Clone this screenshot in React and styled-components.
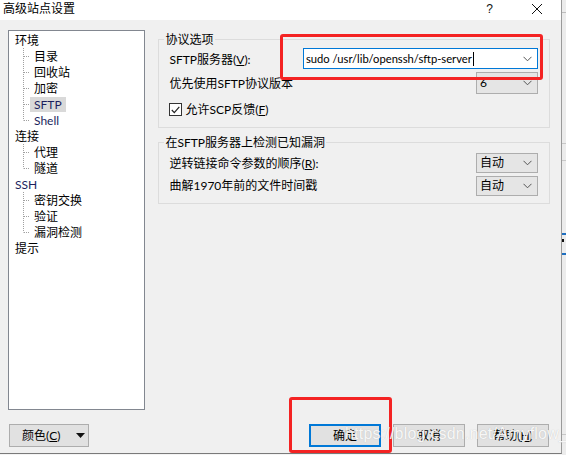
import React from "react";
import styled, { createGlobalStyle } from "styled-components";

const Global = createGlobalStyle`
  html, body { margin: 0; padding: 0; background: #f0f0f0; }
  body { font-family: Lato, "Noto Sans CJK SC", sans-serif; font-size: 12px; color: #000; }
`;

const FONT = `Lato, "Noto Sans CJK SC", sans-serif`;

const Window = styled.div`
  position: relative;
  width: 566px;
  height: 455px;
  overflow: hidden;
  display: flex;
  background: #f4f4f4;
`;

const Dialog = styled.div`
  width: 561px;
  height: 453px;
  border-right: 1px solid #9a9a9a;
  border-bottom: 1px solid #7a7a7a;
  display: flex;
  flex-direction: column;
  background: #f0f0f0;
  flex: none;
`;

const Strip = styled.div`
  flex: 1;
  background:
    linear-gradient(#bdbdbd, #bdbdbd) 0 12px / 100% 1px no-repeat,
    linear-gradient(#c8c8c8, #c8c8c8) 0 143px / 100% 1px no-repeat,
    linear-gradient(#c8c8c8, #c8c8c8) 0 160px / 100% 1px no-repeat,
    linear-gradient(#1f6fc0, #1f6fc0) 0 233px / 100% 2px no-repeat,
    linear-gradient(#111, #111) 0 239px / 60% 3px no-repeat,
    linear-gradient(#1f6fc0, #1f6fc0) 0 253px / 100% 2px no-repeat,
    linear-gradient(#c8c8c8, #c8c8c8) 0 434px / 100% 1px no-repeat,
    #ececec;
`;

const TitleBar = styled.div`
  height: 20px;
  background: #fff;
  display: flex;
  align-items: center;
  padding-left: 3px;
  flex: none;
`;

const Title = styled.span`
  flex: 1;
  font-family: ${FONT};
  font-size: 12px;
  line-height: 16px;
  margin-top: -2px;
`;

const HelpGlyph = styled.span`
  font-family: "Liberation Sans", sans-serif;
  font-size: 12px;
  line-height: 14px;
  margin-top: -3px;
  margin-right: 38px;
  color: #111;
`;

const CloseBtn = styled.span`
  display: flex;
  width: 12px;
  height: 12px;
  margin-right: 18px;
  margin-top: -2px;
`;

const Body = styled.div`
  flex: 1;
  display: flex;
  flex-direction: column;
  padding: 0 11px 0 8px;
`;

const Main = styled.div`
  display: flex;
  align-items: flex-start;
  gap: 13px;
`;

const TreePanel = styled.div`
  margin-top: 10px;
  width: 134px;
  height: 377px;
  background: #fff;
  border: 1px solid #828790;
  padding: 1px 0 0 2px;
  box-sizing: content-box;
`;

const TreeRow = styled.div`
  display: flex;
  height: 16px;
  align-items: center;
`;

const TreeLabel = styled.span`
  font-family: ${FONT};
  font-size: 12px;
  line-height: 15px;
  padding: 0 4px;
  background: ${(p) => (p.$selected ? "#d9d9d9" : "transparent")};
  color: ${(p) => (p.$latin ? "#1c1f5e" : "#000")};
`;

const RightCol = styled.div`
  margin-top: 19px;
  width: 393px;
  display: flex;
  flex-direction: column;
  gap: 14px;
`;

const GroupBox = styled.div`
  border: 1px solid #dcdcdc;
  display: flex;
  flex-direction: column;
  padding: 0 11px ${(p) => p.$pb}px 10px;
`;

const Caption = styled.span`
  align-self: flex-start;
  margin: -8px 0 0 -5px;
  padding: 0 1px;
  background: #f0f0f0;
  font-family: ${FONT};
  font-size: 12px;
  line-height: 16px;
`;

const Row = styled.div`
  height: ${(p) => p.$h}px;
  display: flex;
  align-items: center;
  justify-content: space-between;
`;

const Label = styled.span`
  font-family: ${FONT};
  font-size: 12px;
  line-height: 16px;
  margin-top: ${(p) => p.$mt || 0}px;
`;

const Mn = styled.span`
  text-decoration: underline;
  text-underline-offset: 1px;
`;

const TextInput = styled.div`
  width: 231px;
  height: 19px;
  border: 1px solid #0078d7;
  background: #fff;
  display: flex;
  align-items: center;
  padding: 0 0 0 2px;
  margin-top: -1px;
`;

const InputText = styled.span`
  flex: 1;
  font-family: ${FONT};
  font-size: 11.2px;
  line-height: 16px;
  display: flex;
  align-items: center;
`;

const Caret = styled.span`
  display: inline-block;
  width: 1px;
  height: 14px;
  background: #000;
  margin-left: 1px;
`;

const Select = styled.div`
  height: ${(p) => p.$h || 20}px;
  border: 1px solid #adadad;
  background: #e5e5e5;
  display: flex;
  align-items: center;
  padding-left: 3px;
  box-sizing: content-box;
  width: 57px;
`;

const SelectText = styled.span`
  flex: 1;
  font-family: ${FONT};
  font-size: 12px;
  line-height: 16px;
`;

const ChevronBox = styled.span`
  display: flex;
  width: 9px;
  margin-right: 5px;
`;

const CheckRow = styled.div`
  height: ${(p) => p.$h}px;
  display: flex;
  align-items: center;
  gap: 3px;
`;

const CheckBox = styled.span`
  width: 11px;
  height: 11px;
  border: 1px solid #333;
  background: #fff;
  display: flex;
  align-items: center;
  justify-content: center;
`;

const Footer = styled.div`
  margin-top: 14px;
  display: flex;
  align-items: center;
  padding-left: 1px;
  padding-right: 1px;
`;

const Button = styled.div`
  width: ${(p) => p.$w || 72}px;
  height: 23px;
  box-sizing: border-box;
  border: ${(p) => (p.$primary ? "2px solid #0078d7" : "1px solid #adadad")};
  background: #e1e1e1;
  display: flex;
  align-items: center;
  justify-content: center;
  font-family: ${FONT};
  font-size: 12px;
  line-height: 16px;
  margin-left: ${(p) => p.$ml || 0}px;
`;

const ColorBtn = styled(Button)`
  justify-content: flex-start;
  padding-left: 12px;
  gap: 16px;
`;

const Spacer = styled.div`
  flex: 1;
`;

const Annotation = styled.div`
  position: absolute;
  left: ${(p) => p.$x}px;
  top: ${(p) => p.$y}px;
  width: ${(p) => p.$w}px;
  height: ${(p) => p.$h}px;
  box-sizing: border-box;
  border: 3px solid #f42323;
  border-radius: 3px;
  pointer-events: none;
`;

const Watermark = styled.div`
  position: absolute;
  left: 345px;
  top: 424px;
  font-family: "Liberation Sans", Arial, sans-serif;
  font-size: 16px;
  line-height: 20px;
  color: rgba(255, 255, 255, 0.9);
  text-shadow: 0 0 1px rgba(150, 150, 150, 0.55);
  letter-spacing: 0.2px;
  pointer-events: none;
  white-space: nowrap;
`;

const Chevron = () => (
  <ChevronBox>
    <svg width="9" height="6" viewBox="0 0 9 6">
      <path d="M0.5 0.8 L4.5 4.8 L8.5 0.8" fill="none" stroke="#555" strokeWidth="1" />
    </svg>
  </ChevronBox>
);

const Connector = ({ last }) => (
  <svg width="19" height="16" viewBox="0 0 19 16" style={{ flex: "none" }}>
    <line x1="12.5" y1="0" x2="12.5" y2={last ? 8.5 : 16} stroke="#a0a0a0" strokeDasharray="1 1" />
    <line x1="13" y1="8.5" x2="19" y2="8.5" stroke="#a0a0a0" strokeDasharray="1 1" />
  </svg>
);

const tree = [
  { label: "环境", children: ["目录", "回收站", "加密", "SFTP", "Shell"] },
  { label: "连接", children: ["代理", "隧道"] },
  { label: "SSH", children: ["密钥交换", "验证", "漏洞检测"] },
  { label: "提示", children: [] },
];

const isLatin = (s) => /^[A-Za-z]+$/.test(s);

export default function App() {
  return (
    <>
      <Global />
      <Window>
        <Dialog>
          <TitleBar>
            <Title>高级站点设置</Title>
            <HelpGlyph>?</HelpGlyph>
            <CloseBtn>
              <svg width="12" height="12" viewBox="0 0 12 12">
                <path d="M1 1 L11 11 M11 1 L1 11" stroke="#111" strokeWidth="1" />
              </svg>
            </CloseBtn>
          </TitleBar>
          <Body>
            <Main>
              <TreePanel>
                {tree.map((node) => (
                  <React.Fragment key={node.label}>
                    <TreeRow>
                      <TreeLabel $latin={isLatin(node.label)}>{node.label}</TreeLabel>
                    </TreeRow>
                    {node.children.map((c, i) => (
                      <TreeRow key={c}>
                        <Connector last={i === node.children.length - 1} />
                        <TreeLabel $latin={isLatin(c)} $selected={c === "SFTP"}>
                          {c}
                        </TreeLabel>
                      </TreeRow>
                    ))}
                  </React.Fragment>
                ))}
              </TreePanel>
              <RightCol>
                <GroupBox $pb={3}>
                  <Caption>协议选项</Caption>
                  <Row $h={22}>
                    <Label $mt={2}>
                      SFTP服务器(<Mn>V</Mn>):
                    </Label>
                    <TextInput>
                      <InputText>
                        sudo /usr/lib/openssh/sftp-server
                        <Caret />
                      </InputText>
                      <Chevron />
                    </TextInput>
                  </Row>
                  <Row $h={25}>
                    <Label $mt={2}>优先使用SFTP协议版本</Label>
                    <Select $h={20}>
                      <SelectText>6</SelectText>
                      <Chevron />
                    </Select>
                  </Row>
                  <CheckRow $h={29}>
                    <CheckBox>
                      <svg width="9" height="8" viewBox="0 0 9 8">
                        <path d="M0.8 4 L3.3 6.6 L8.3 0.8" fill="none" stroke="#222" strokeWidth="1.2" />
                      </svg>
                    </CheckBox>
                    <Label>
                      允许SCP反馈(<Mn>F</Mn>)
                    </Label>
                  </CheckRow>
                </GroupBox>
                <GroupBox $pb={6}>
                  <Caption>在SFTP服务器上检测已知漏洞</Caption>
                  <Row $h={23}>
                    <Label $mt={2}>
                      逆转链接命令参数的顺序(<Mn>R</Mn>):
                    </Label>
                    <Select $h={18}>
                      <SelectText>自动</SelectText>
                      <Chevron />
                    </Select>
                  </Row>
                  <Row $h={23}>
                    <Label>曲解1970年前的文件时间戳</Label>
                    <Select $h={18}>
                      <SelectText>自动</SelectText>
                      <Chevron />
                    </Select>
                  </Row>
                </GroupBox>
              </RightCol>
            </Main>
            <Footer>
              <ColorBtn $w={80}>
                <span>
                  颜色(<Mn>C</Mn>)
                </span>
                <svg width="9" height="5" viewBox="0 0 9 5">
                  <path d="M0 0 H9 L4.5 5 Z" fill="#111" />
                </svg>
              </ColorBtn>
              <Spacer />
              <Button $primary>确定</Button>
              <Button $ml={12}>取消</Button>
              <Button $ml={12}>
                <span>
                  帮助(<Mn>H</Mn>)
                </span>
              </Button>
            </Footer>
          </Body>
        </Dialog>
        <Strip />
        <Annotation $x={280} $y={34} $w={263} $h={46} />
        <Annotation $x={289} $y={397} $w={103} $h={56} />
        <Watermark>https://blog.csdn.net/Amyflow_</Watermark>
      </Window>
    </>
  );
}
